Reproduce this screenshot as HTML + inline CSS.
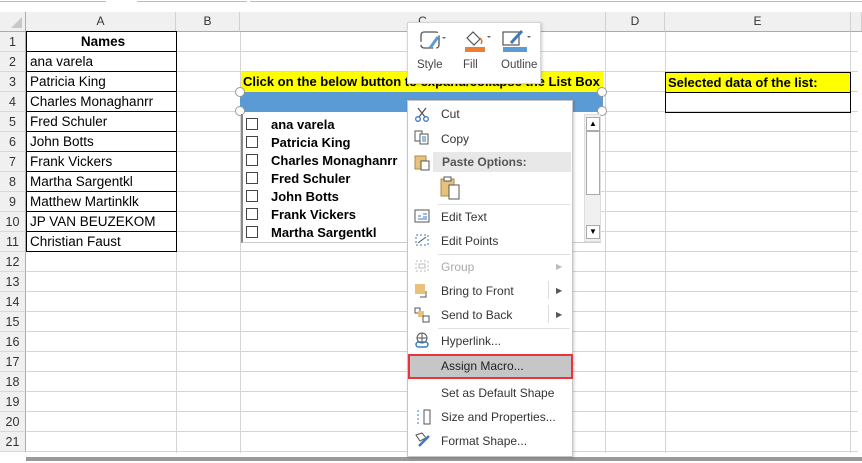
<!DOCTYPE html><html><head><style>
*{margin:0;padding:0;box-sizing:border-box}
body{width:862px;height:463px;overflow:hidden;background:#fff;font-family:"Liberation Sans",Calibri,sans-serif;position:relative}
.a{position:absolute}
.grid{left:26px;top:32px;width:832px;height:422px;background:
repeating-linear-gradient(to bottom,transparent 0 19px,#d4d4d4 19px 20px);}
.vl{position:absolute;top:12px;width:1px;height:442px;background:#d4d4d4}
.hdr{top:12px;height:20px;background:#f0f0f0;border-bottom:1px solid #ababab;font-size:12px;color:#333;text-align:center;line-height:19px;border-right:1px solid #d0d0d0}
.rh{left:0;width:26px;background:#f0f0f0;border-right:1px solid #ababab;font-size:12.5px;color:#333;text-align:center;height:20px;line-height:21px;border-bottom:1px solid #d8d8d8}
.cell{font-size:13.5px;color:#000;line-height:20px;padding-left:3px;border:1px solid #000;border-top:none;height:20px;white-space:nowrap}
.li{font-size:13px;font-weight:bold;height:18px;line-height:18px;position:absolute;left:3px;white-space:nowrap}
.cb{display:inline-block;width:12px;height:12px;border:1.5px solid #444;vertical-align:-1px;margin-right:13px;background:#fff}
.mi{position:absolute;left:33px;font-size:12px;color:#333;white-space:nowrap}
.sep{position:absolute;left:30px;right:2px;height:1px;background:#e1e1e1}
.h{position:absolute;width:10px;height:10px;border:1.5px solid #999;border-radius:50%;background:#fff}
</style></head><body>
<div class="a" style="left:0;top:0;width:862px;height:12px;background:#fff"></div>
<div class="a" style="left:0;top:0;width:106px;height:2px;border-bottom:1px solid #bbb"></div>
<div class="a" style="left:137px;top:0;width:110px;height:2px;border-bottom:1px solid #bbb"></div>
<div class="a" style="left:250px;top:0;width:612px;height:2px;border-bottom:1px solid #bbb"></div>
<div class="a grid"></div>
<div class="vl" style="left:176px"></div><div class="vl" style="left:240px"></div><div class="vl" style="left:605px"></div><div class="vl" style="left:665px"></div><div class="vl" style="left:850px"></div>
<div class="a" style="left:0;top:12px;width:26px;height:20px;background:#f0f0f0;border-right:1px solid #ababab;border-bottom:1px solid #ababab"><div style="position:absolute;right:3px;bottom:3px;width:0;height:0;border-left:11px solid transparent;border-bottom:11px solid #c8c8c8"></div></div>
<div class="a hdr" style="left:26px;width:150px">A</div>
<div class="a hdr" style="left:176px;width:64px">B</div>
<div class="a hdr" style="left:240px;width:366px">C</div>
<div class="a hdr" style="left:606px;width:59px">D</div>
<div class="a hdr" style="left:665px;width:186px">E</div>
<div class="a hdr" style="left:851px;width:11px"></div>
<div class="a" style="left:0;top:32px">
<div class="rh a" style="top:0">1</div><div class="rh a" style="top:20px">2</div><div class="rh a" style="top:40px">3</div><div class="rh a" style="top:60px">4</div><div class="rh a" style="top:80px">5</div><div class="rh a" style="top:100px">6</div><div class="rh a" style="top:120px">7</div><div class="rh a" style="top:140px">8</div><div class="rh a" style="top:160px">9</div><div class="rh a" style="top:180px">10</div><div class="rh a" style="top:200px">11</div><div class="rh a" style="top:220px">12</div><div class="rh a" style="top:240px">13</div><div class="rh a" style="top:260px">14</div><div class="rh a" style="top:280px">15</div><div class="rh a" style="top:300px">16</div><div class="rh a" style="top:320px">17</div><div class="rh a" style="top:340px">18</div><div class="rh a" style="top:360px">19</div><div class="rh a" style="top:380px">20</div><div class="rh a" style="top:400px">21</div>
</div>
<div class="a" style="left:0;top:453px;width:862px;height:10px;background:#fff"></div>
<div class="a" style="left:26px;top:457px;width:836px;height:4px;background:#9a9a9a"></div>
<div class="a" style="left:26px;top:31px;width:151px">
<div class="cell" style="border-top:1px solid #000;font-weight:bold;text-align:center;height:21px">Names</div>
<div class="cell">ana varela</div><div class="cell">Patricia King</div><div class="cell">Charles Monaghanrr</div><div class="cell">Fred Schuler</div><div class="cell">John Botts</div><div class="cell">Frank Vickers</div><div class="cell">Martha Sargentkl</div><div class="cell">Matthew Martinklk</div><div class="cell">JP VAN BEUZEKOM</div><div class="cell">Christian Faust</div>
</div>
<div class="a" style="left:241px;top:72px;width:362px;height:20px;background:#ffff00;font-size:13px;font-weight:bold;line-height:20px;padding-left:2px;white-space:nowrap;overflow:hidden">Click on the below button to expand/collapse the List Box</div>
<div class="a" style="left:665px;top:72px;width:186px;height:41px;border:1px solid #000"><div style="height:20px;background:#ffff00;font-size:13px;font-weight:bold;line-height:20px;padding-left:2px;border-bottom:1px solid #000">Selected data of the list:</div></div>
<div class="a" style="left:240px;top:92px;width:363px;height:20px;background:#5b9bd5"></div>
<div class="h" style="left:235px;top:87px"></div><div class="h" style="left:235px;top:106px"></div><div class="h" style="left:597px;top:87px"></div><div class="h" style="left:597px;top:106px"></div>
<div class="a" style="left:241px;top:114px;width:360px;height:129px;border-left:2px solid #888;border-bottom:1px solid #ccc;background:#fff">
<div class="li" style="top:2px"><span class="cb"></span>ana varela</div>
<div class="li" style="top:20px"><span class="cb"></span>Patricia King</div>
<div class="li" style="top:38px"><span class="cb"></span>Charles Monaghanrr</div>
<div class="li" style="top:56px"><span class="cb"></span>Fred Schuler</div>
<div class="li" style="top:74px"><span class="cb"></span>John Botts</div>
<div class="li" style="top:92px"><span class="cb"></span>Frank Vickers</div>
<div class="li" style="top:110px"><span class="cb"></span>Martha Sargentkl</div>
<div class="a" style="left:341px;top:0;width:17px;height:128px;background:#f0f0f0;border:1px solid #ddd">
<div class="a" style="left:1px;top:2px;width:14px;height:14px;border:1px solid #aaa;background:#fff;font-size:8px;text-align:center;line-height:12px">▲</div>
<div class="a" style="left:1px;top:16px;width:14px;height:64px;border:1px solid #aaa;background:#fff"></div>
<div class="a" style="left:1px;top:110px;width:14px;height:14px;border:1px solid #aaa;background:#fff;font-size:8px;text-align:center;line-height:12px">▼</div></div>
</div>
<div class="a" style="left:407px;top:22px;width:134px;height:62px;background:#fff;border:1px solid #d6d6d6;box-shadow:1px 1px 3px rgba(0,0,0,.2)">
<svg class="a" style="left:10px;top:6px" width="30" height="24"><rect x="3" y="3" width="18" height="16" rx="3" fill="none" stroke="#555" stroke-width="1.3" stroke-dasharray="14 3"/><path d="M12 19 L20 8" stroke="#5b9bd5" stroke-width="3"/><path d="M24 8 l4 0 l-2 2z" fill="#666"/></svg>
<div class="a" style="left:9px;top:36px;font-size:11.5px;color:#444">Style</div>
<svg class="a" style="left:55px;top:5px" width="30" height="28"><path d="M4 10 L10 4 L17 11 L11 17 Z" fill="none" stroke="#555" stroke-width="1.2"/><path d="M17 10 q3 3 1 6" stroke="#d9702b" fill="none" stroke-width="1.5"/><rect x="2" y="19" width="20" height="5" fill="#ed7d31"/><path d="M24 8 l4 0 l-2 2z" fill="#666"/></svg>
<div class="a" style="left:55px;top:36px;font-size:11.5px;color:#444">Fill</div>
<svg class="a" style="left:93px;top:5px" width="32" height="28"><rect x="2" y="4" width="16" height="13" fill="none" stroke="#555" stroke-width="1.2"/><path d="M10 15 L21 3" stroke="#3b7ac2" stroke-width="3"/><rect x="2" y="19" width="24" height="5" fill="#5b9bd5"/><path d="M26 8 l4 0 l-2 2z" fill="#666"/></svg>
<div class="a" style="left:93px;top:36px;font-size:11.5px;color:#444">Outline</div>
</div>
<div class="a" style="left:407px;top:100px;width:166px;height:357px;background:#fff;border:1px solid #c6c6c6;box-shadow:1px 1px 3px rgba(0,0,0,.2)">
<div class="a" style="left:25px;top:51px;width:138px;height:20px;background:#e8e8e8"></div>
<svg class="a" style="left:6px;top:5px" width="16" height="16"><path d="M4 2 L11 11 M12 2 L5 11" stroke="#555" stroke-width="1.3"/><circle cx="4" cy="13" r="2.3" fill="none" stroke="#3b7ac2" stroke-width="1.3"/><circle cx="12" cy="13" r="2.3" fill="none" stroke="#3b7ac2" stroke-width="1.3"/></svg>
<div class="mi" style="top:6px">Cut</div>
<svg class="a" style="left:6px;top:29px" width="16" height="16"><rect x="1" y="1" width="7" height="10" fill="#fff" stroke="#555"/><rect x="6" y="4" width="8" height="10" fill="#fff" stroke="#555"/><path d="M8 7h4M8 9h4M8 11h4" stroke="#3b7ac2"/></svg>
<div class="mi" style="top:31px">Copy</div>
<svg class="a" style="left:6px;top:52px" width="16" height="18"><rect x="1" y="3" width="11" height="13" fill="#e8c27a" stroke="#b08a4a"/><rect x="7" y="8" width="8" height="9" fill="#fff" stroke="#555"/></svg>
<div class="mi" style="top:54px;left:34px;font-weight:bold;color:#555">Paste Options:</div>
<svg class="a" style="left:32px;top:75px" width="20" height="24"><rect x="1" y="3" width="13" height="17" fill="#e8c27a" stroke="#b08a4a"/><rect x="4" y="1" width="7" height="4" fill="#fff" stroke="#555"/><rect x="9" y="9" width="10" height="14" fill="#fff" stroke="#555"/></svg>
<div class="sep" style="top:103px"></div>
<svg class="a" style="left:6px;top:108px" width="16" height="14"><rect x="1" y="1" width="14" height="12" fill="none" stroke="#555"/><path d="M4 7h3M9 5h4M9 8h4M4 10h9" stroke="#3b7ac2"/></svg>
<div class="mi" style="top:109px">Edit Text</div>
<svg class="a" style="left:6px;top:132px" width="16" height="14"><path d="M2 2h12v10H2z" fill="none" stroke="#3b7ac2" stroke-dasharray="2 2"/><path d="M4 10 L12 4" stroke="#555"/></svg>
<div class="mi" style="top:133px">Edit Points</div>
<div class="sep" style="top:153px"></div>
<svg class="a" style="left:6px;top:158px" width="16" height="14"><rect x="2" y="2" width="12" height="10" fill="none" stroke="#bbb" stroke-dasharray="2 2"/><rect x="5" y="5" width="6" height="4" fill="none" stroke="#bbb"/></svg>
<div class="mi" style="top:159px;color:#aaa">Group</div><div class="a" style="left:148px;top:161px;font-size:8px;color:#bbb">▶</div>
<svg class="a" style="left:6px;top:182px" width="16" height="16"><rect x="1" y="1" width="10" height="10" fill="#e8c27a"/><path d="M12 8v6h-6" fill="none" stroke="#555"/></svg>
<div class="mi" style="top:183px">Bring to Front</div><div class="a" style="left:140px;top:180px;width:1px;height:18px;background:#ddd"></div><div class="a" style="left:148px;top:185px;font-size:8px;color:#555">▶</div>
<svg class="a" style="left:6px;top:206px" width="16" height="16"><rect x="1" y="1" width="5" height="5" fill="none" stroke="#555"/><rect x="4" y="4" width="6" height="6" fill="#e8c27a"/><rect x="9" y="9" width="6" height="6" fill="none" stroke="#555"/></svg>
<div class="mi" style="top:207px">Send to Back</div><div class="a" style="left:140px;top:204px;width:1px;height:18px;background:#ddd"></div><div class="a" style="left:148px;top:209px;font-size:8px;color:#555">▶</div>
<div class="sep" style="top:227px"></div>
<svg class="a" style="left:6px;top:231px" width="16" height="16"><circle cx="8" cy="6" r="5" fill="none" stroke="#555"/><path d="M3 6h10M8 1v10" stroke="#555"/><rect x="2" y="10" width="12" height="5" rx="2.5" fill="none" stroke="#3b7ac2" stroke-width="1.5"/></svg>
<div class="mi" style="top:233px">Hyperlink...</div>
<div class="a" style="left:0;top:253px;width:165px;height:25px;background:#c6c6c6;border:2px solid #e8343b"></div>
<div class="mi" style="top:258px;color:#222">Assign Macro...</div>
<div class="mi" style="top:285px">Set as Default Shape</div>
<svg class="a" style="left:6px;top:308px" width="18" height="16"><path d="M4 1v14" stroke="#3b7ac2" stroke-dasharray="2 2"/><rect x="10" y="1" width="6" height="14" fill="none" stroke="#555"/></svg>
<div class="mi" style="top:309px">Size and Properties...</div>
<svg class="a" style="left:6px;top:331px" width="18" height="16"><path d="M2 3 L8 1 L12 6 L6 9 Z" fill="none" stroke="#555"/><path d="M5 14 L15 4" stroke="#3b7ac2" stroke-width="2.5"/></svg>
<div class="mi" style="top:333px">Format Shape...</div>
</div>
</body></html>
